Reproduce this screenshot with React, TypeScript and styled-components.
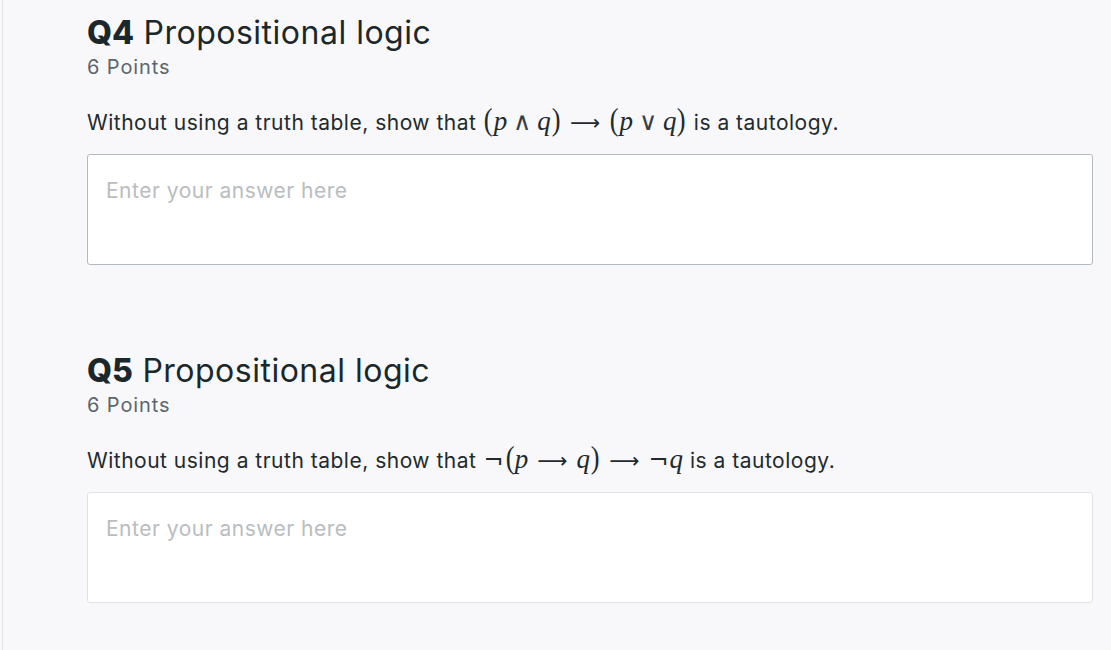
import React from 'react';
import styled, { createGlobalStyle } from 'styled-components';

const GlobalStyle = createGlobalStyle`
  html, body {
    margin: 0;
    padding: 0;
    background: #f8f8fa;
  }
  body {
    font-family: Inter, "Open Sans", Arial, sans-serif;
    color: #232d30;
  }
`;

const Page = styled.main`
  margin-left: 2px;
  min-height: 650px;
  border-left: 1px solid #e1e1ea;
  padding: 14px 18px 0 84px;
  box-sizing: border-box;
  background: #f8f8fa;
`;

const Question = styled.section`
  width: 1006px;
  margin-bottom: 87px;
`;

const Title = styled.h2`
  margin: 0;
  font-size: 32px;
  line-height: 38px;
  font-weight: 400;
  color: #1b282b;
  letter-spacing: 0.5px;

  strong {
    font-weight: 800;
    letter-spacing: 0;
  }
`;

const Points = styled.div`
  margin-top: 3px;
  font-size: 20px;
  line-height: 24px;
  letter-spacing: 0.9px;
  color: #5b666c;
`;

const Prompt = styled.p`
  margin: 30px 0 0;
  font-size: 21px;
  line-height: 28px;
  height: 28px;
  letter-spacing: 0.5px;
  color: #222a2d;
  white-space: nowrap;
`;

const Math = styled.span`
  font-family: "Liberation Serif", "DejaVu Serif", serif;
  letter-spacing: 0;
  line-height: 0;
  margin: 0 7px 0 7px;
`;

const Var = styled.i`
  font-size: 27px;
  font-style: italic;
`;

const Paren = styled.span`
  font-size: 31px;
  display: inline-block;
  transform: scaleX(0.85);
`;

const Op = styled.span`
  font-family: "DejaVu Sans", sans-serif;
  font-size: 25px;
  font-weight: 300;
  color: #3a4042;
  margin: 0 6px;
`;

const Arrow = styled.span`
  font-family: "DejaVu Sans", sans-serif;
  font-size: 21px;
  margin: 0 9px;
`;

const Neg = styled.span`
  font-family: "DejaVu Sans", sans-serif;
  font-size: 24px;
  margin-right: 1px;
`;

const Answer = styled.textarea<{ $active?: boolean }>`
  display: block;
  box-sizing: border-box;
  margin-top: 17px;
  width: 1006px;
  height: 111px;
  padding: 22px 18px;
  border: 1px solid ${(p) => (p.$active ? '#b3b9c1' : '#e1e1ea')};
  border-radius: 3px;
  background: #fff;
  resize: none;
  font-family: Inter, "Open Sans", Arial, sans-serif;
  font-size: 21px;
  line-height: 28px;
  letter-spacing: 0.5px;
  color: #232d30;
  outline: none;

  &::placeholder {
    color: #b9bdc0;
  }
`;

export default function App() {
  return (
    <>
      <GlobalStyle />
      <Page>
        <Question>
          <Title>
            <strong>Q4</strong> Propositional logic
          </Title>
          <Points>6 Points</Points>
          <Prompt>
            Without using a truth table, show that
            <Math>
              <Paren>(</Paren>
              <Var>p</Var>
              <Op>∧</Op>
              <Var>q</Var>
              <Paren>)</Paren>
              <Arrow>⟶</Arrow>
              <Paren>(</Paren>
              <Var>p</Var>
              <Op>∨</Op>
              <Var>q</Var>
              <Paren>)</Paren>
            </Math>
            is a tautology.
          </Prompt>
          <Answer $active placeholder="Enter your answer here" />
        </Question>
        <Question>
          <Title>
            <strong>Q5</strong> Propositional logic
          </Title>
          <Points>6 Points</Points>
          <Prompt>
            Without using a truth table, show that
            <Math>
              <Neg>¬</Neg>
              <Paren>(</Paren>
              <Var>p</Var>
              <Arrow>⟶</Arrow>
              <Var>q</Var>
              <Paren>)</Paren>
              <Arrow>⟶</Arrow>
              <Neg>¬</Neg>
              <Var>q</Var>
            </Math>
            is a tautology.
          </Prompt>
          <Answer placeholder="Enter your answer here" />
        </Question>
      </Page>
    </>
  );
}
